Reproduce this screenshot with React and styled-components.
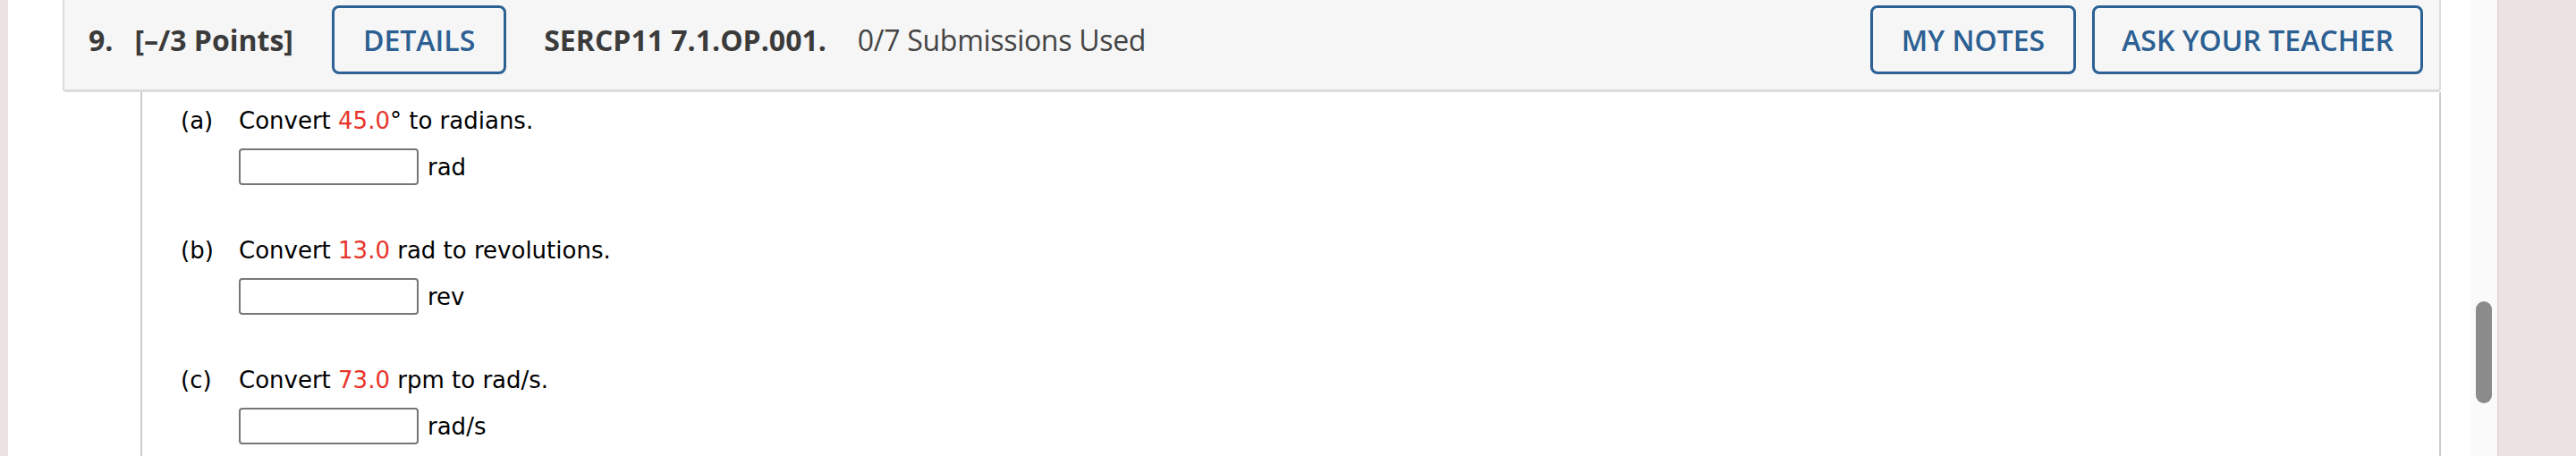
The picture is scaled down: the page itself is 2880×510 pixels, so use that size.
import React from 'react';
import styled, { createGlobalStyle } from 'styled-components';

const GlobalStyle = createGlobalStyle`
  html, body {
    margin: 0;
    padding: 0;
  }
  body {
    background: #ece2e1;
    overflow: hidden;
  }
`;

const Screen = styled.div`
  display: flex;
  width: 2880px;
  height: 510px;
  overflow: hidden;
  background: #ece2e1;
`;

const Gutter = styled.div`
  flex: ${props => (props.grow ? '1 1 auto' : '0 0 9px')};
  background: #ece2e1;
`;

const Main = styled.main`
  flex: 0 0 2753px;
  box-sizing: border-box;
  padding: 0 33px 0 61px;
  background: #fff;
  overflow: hidden;
`;

const ScrollTrack = styled.div`
  flex: 0 0 30px;
  display: flex;
  flex-direction: column;
  background: #fafafa;
  border-right: 1px solid #dccfcf;
`;

const Thumb = styled.div`
  width: 18px;
  height: 114px;
  margin: 337px 0 0 6px;
  border-radius: 9px;
  background: #8b8b8b;
`;

const Card = styled.section`
  display: flex;
  flex-direction: column;
`;

const Header = styled.header`
  display: flex;
  align-items: center;
  box-sizing: border-box;
  height: 103px;
  padding: 6px 18px 17px 27px;
  background: #f6f6f6;
  border: 2px solid #dcdcdc;
  border-top: none;
  border-bottom-width: 3px;
  border-radius: 0 0 4px 4px;
  font-family: 'Open Sans', 'Liberation Sans', sans-serif;
  font-size: 32px;
  color: #3b3b3b;
`;

const Strong = styled.span`
  font-weight: 700;
  margin-left: ${props => props.gap || 0}px;
  white-space: nowrap;
`;

const Muted = styled.span`
  font-weight: 400;
  margin-left: ${props => props.gap || 0}px;
  color: #444;
  letter-spacing: -0.3px;
  white-space: nowrap;
`;

const Spacer = styled.div`
  flex: 1;
`;

const OutlineButton = styled.button`
  box-sizing: border-box;
  height: 77px;
  margin-left: ${props => props.gap || 0}px;
  padding: 0 ${props => props.pad || 32}px;
  background: transparent;
  border: 3px solid #2c6194;
  border-radius: 8px;
  font-family: 'Open Sans', 'Liberation Sans', sans-serif;
  font-size: 32px;
  font-weight: 600;
  color: #2c5f92;
  white-space: nowrap;
  cursor: pointer;
`;

const Body = styled.div`
  margin-left: 87px;
  padding: 14px 0 0 43px;
  border-left: 2px solid #cccccc;
  border-right: 2px solid #cccccc;
  height: 420px;
  font-family: 'DejaVu Sans', Verdana, sans-serif;
  font-size: 26px;
  line-height: 36px;
  color: #000;
`;

const Part = styled.div`
  display: grid;
  grid-template-columns: 65px auto;
  margin-bottom: 55px;
`;

const Prompt = styled.div`
  white-space: nowrap;
`;

const Given = styled.span`
  color: #e8352b;
`;

const AnswerRow = styled.div`
  display: flex;
  align-items: center;
  gap: 10px;
  margin-top: 13px;
`;

const AnswerInput = styled.input`
  box-sizing: border-box;
  width: 201px;
  height: 41px;
  border: 2px solid #767676;
  border-radius: 4px;
  background: #fff;
`;

const parts = [
  { label: '(a)', before: 'Convert ', value: '45.0', after: '° to radians.', unit: 'rad' },
  { label: '(b)', before: 'Convert ', value: '13.0', after: ' rad to revolutions.', unit: 'rev' },
  { label: '(c)', before: 'Convert ', value: '73.0', after: ' rpm to rad/s.', unit: 'rad/s' },
];

export default function App() {
  return (
    <>
      <GlobalStyle />
      <Screen>
        <Gutter />
        <Main>
          <Card>
            <Header>
              <Strong>9.</Strong>
              <Strong gap={24}>[–/3 Points]</Strong>
              <OutlineButton gap={43}>DETAILS</OutlineButton>
              <Strong gap={42}>SERCP11 7.1.OP.001.</Strong>
              <Muted gap={35}>0/7 Submissions Used</Muted>
              <Spacer />
              <OutlineButton>MY NOTES</OutlineButton>
              <OutlineButton gap={18} pad={30}>ASK YOUR TEACHER</OutlineButton>
            </Header>
            <Body>
              {parts.map(p => (
                <Part key={p.label}>
                  <span>{p.label}</span>
                  <div>
                    <Prompt>
                      {p.before}
                      <Given>{p.value}</Given>
                      {p.after}
                    </Prompt>
                    <AnswerRow>
                      <AnswerInput type="text" />
                      <span>{p.unit}</span>
                    </AnswerRow>
                  </div>
                </Part>
              ))}
            </Body>
          </Card>
        </Main>
        <ScrollTrack>
          <Thumb />
        </ScrollTrack>
        <Gutter grow />
      </Screen>
    </>
  );
}
